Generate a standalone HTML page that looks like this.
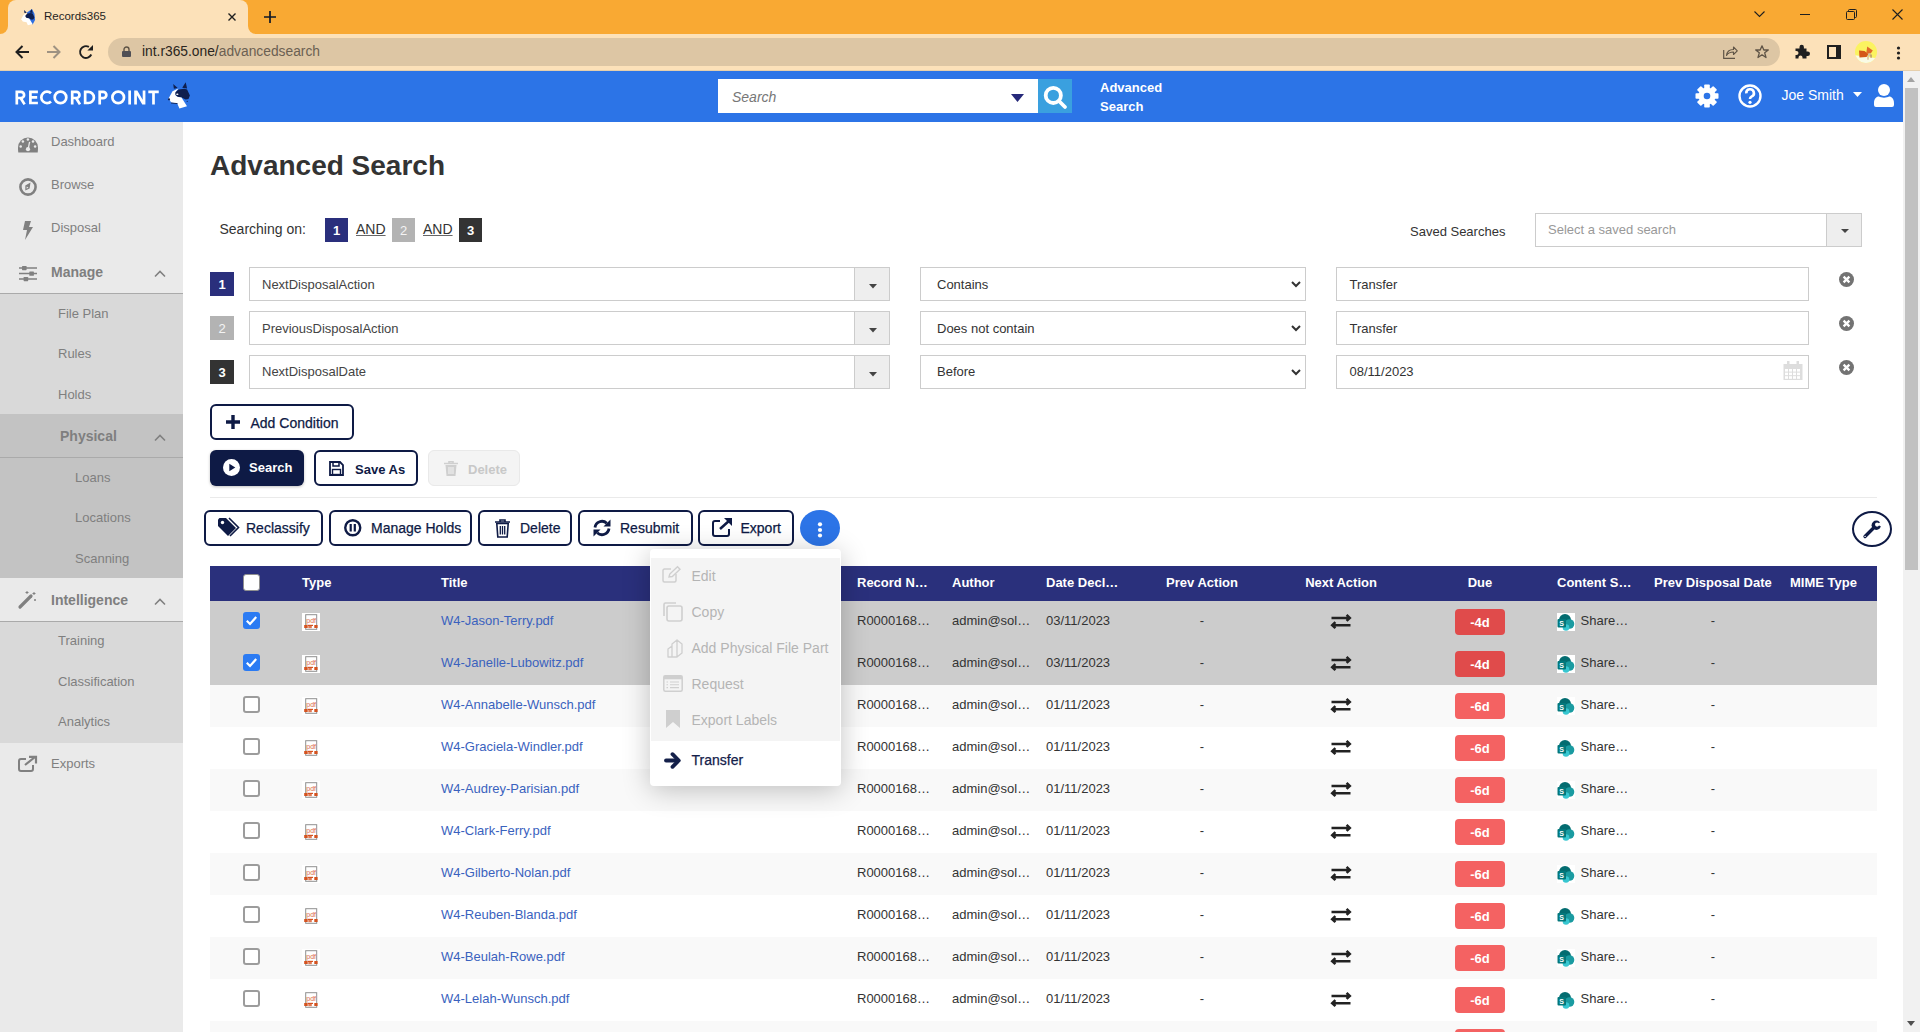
<!DOCTYPE html>
<html><head><meta charset="utf-8"><title>Records365</title>
<style>
html,body{margin:0;padding:0;}
body{width:1920px;height:1032px;overflow:hidden;position:relative;background:#fff;font-family:"Liberation Sans", sans-serif;}
.r{position:absolute;box-sizing:border-box;}
.t{position:absolute;white-space:nowrap;}
svg.r{overflow:visible;}
</style></head><body>
<div class="r" style="left:0px;top:0px;width:1920px;height:71px;background:#FCE1B9"></div><div class="r" style="left:0px;top:0px;width:1920px;height:34px;background:#F9A933"></div><div class="r" style="left:0px;top:26px;width:8px;height:8px;background:#FCE1B9"></div><div class="r" style="left:0px;top:0px;width:8px;height:34px;background:#F9A933;border-bottom-right-radius:8px"></div><div class="r" style="left:248px;top:26px;width:8px;height:8px;background:#FCE1B9"></div><div class="r" style="left:248px;top:0px;width:1672px;height:34px;background:#F9A933;border-bottom-left-radius:8px"></div><div class="r" style="left:8px;top:0px;width:240px;height:34px;background:#FCE1B9;border-radius:8px 8px 0 0"></div><svg class="r" style="left:0px;top:0px;" width="50" height="30" viewBox="0 0 50 30"><g transform="translate(17.1 6.4) scale(0.62)"><path d="M16 10L24 4L28 12L29 22L25 29L19 24Z" fill="#2f6fe0"/><path d="M11.2 5.9L11.9 10.8L15.7 10.1Z M23.7 4.2L20.2 9.8L25.1 10.5Z" fill="#0f1f4f"/><path d="M12.9 14.6L16.7 11.5L22.3 10.8L25.1 11.5L27.9 17.4L26.5 20.9L23.7 21.6L19.5 19.5L15.3 18.8L13.3 17.1Z" fill="#0f1f4f"/><path d="M10.5 13.3L16.4 10.5L13.3 14.6L13.3 17.1L15.3 18.8L19.5 19.5L22 23.5L25 28.2L17.4 30.5L15.3 25.5L9.1 24.4L7.7 22L6.3 21Z" fill="#fff"/></g></svg><div class="t " style="left:44px;top:11.27px;font-size:11.5px;line-height:11.5px;font-weight:400;color:#1F1F1F;">Records365</div><svg class="r" style="left:228px;top:13px;" width="8" height="8" viewBox="0 0 8 8"><path d="M0.5 0.5L7.5 7.5M7.5 0.5L0.5 7.5" stroke="#1f1f1f" stroke-width="1.4"/></svg><svg class="r" style="left:264px;top:11px;" width="12" height="12" viewBox="0 0 12 12"><path d="M6 0V12M0 6H12" stroke="#111827" stroke-width="1.7"/></svg><svg class="r" style="left:1754px;top:11px;" width="11" height="6" viewBox="0 0 11 6"><path d="M0.5 0.5L5.5 5.5L10.5 0.5" stroke="#1f1f1f" stroke-width="1.1" fill="none"/></svg><svg class="r" style="left:1800px;top:14px;" width="10" height="1" viewBox="0 0 10 1"><rect x="0" y="0" width="10" height="1" fill="#1f1f1f"/></svg><svg class="r" style="left:1846px;top:9px;" width="11" height="11" viewBox="0 0 11 11"><rect x="0.5" y="2.5" width="8" height="8" rx="1" stroke="#1f1f1f" stroke-width="1" fill="none"/><path d="M2.5 2.5V1.5a1 1 0 0 1 1-1H9.5a1 1 0 0 1 1 1V7.5a1 1 0 0 1-1 1H8.5" stroke="#1f1f1f" stroke-width="1" fill="none"/></svg><svg class="r" style="left:1892px;top:9px;" width="11" height="11" viewBox="0 0 11 11"><path d="M0.5 0.5L10.5 10.5M10.5 0.5L0.5 10.5" stroke="#1f1f1f" stroke-width="1.1"/></svg><svg class="r" style="left:15px;top:45px;" width="14" height="14" viewBox="0 0 14 14"><path d="M14 7H2M7.5 1L1.5 7L7.5 13" stroke="#1f1f1f" stroke-width="2" fill="none"/></svg><svg class="r" style="left:47px;top:45px;" width="14" height="14" viewBox="0 0 14 14"><path d="M0 7H12M6.5 1L12.5 7L6.5 13" stroke="#9e9282" stroke-width="2" fill="none"/></svg><svg class="r" style="left:79px;top:45px;" width="14" height="14" viewBox="0 0 14 14"><path d="M12.3 9.5A5.9 5.9 0 1 1 9.9 1.9" stroke="#1f1f1f" stroke-width="1.9" fill="none"/><path d="M14 0V5.6H8.4Z" fill="#1f1f1f"/></svg><div class="r" style="left:108px;top:38px;width:1672px;height:28px;background:#DDC6A4;border-radius:14px"></div><svg class="r" style="left:122px;top:46px;" width="9" height="11" viewBox="0 0 9 11"><path d="M2 5V3.5a2.5 2.5 0 0 1 5 0V5" stroke="#5f5446" stroke-width="1.4" fill="none"/><rect x="0" y="5" width="9" height="6" rx="1" fill="#4f4f55"/></svg><div class="t " style="left:142px;top:45.32px;font-size:13.8px;line-height:13.8px;font-weight:400;color:#333;"><span style="color:#2a2520">int.r365.one/</span><span style="color:#6b6052">advancedsearch</span></div><svg class="r" style="left:1723px;top:45px;" width="15" height="14" viewBox="0 0 15 14"><path d="M0.7 5V13.3H12" stroke="#5f5446" stroke-width="1.2" fill="none"/><path d="M3.5 10.5C4 6 7 4.5 10.5 4.5V2L14.3 5.8L10.5 9.5V7C7.5 7 5 8 3.5 10.5Z" stroke="#5f5446" stroke-width="1.1" fill="none" stroke-linejoin="round"/></svg><svg class="r" style="left:1755px;top:45px;" width="14" height="14" viewBox="0 0 14 14"><path d="M7 0.8L8.8 5H13.3L9.7 7.8L11 12.5L7 9.8L3 12.5L4.3 7.8L0.7 5H5.2Z" stroke="#5f5446" stroke-width="1.3" fill="none" stroke-linejoin="round"/></svg><svg class="r" style="left:1795px;top:44px;" width="15" height="15" viewBox="0 0 15 15"><path d="M0.5 4.5H4.5V3A2.2 2.2 0 0 1 8.9 3V4.5H11.5V7.5H12.8A2.2 2.2 0 0 1 12.8 11.9H11.5V14.5H7.5V13.5A2 2 0 0 0 3.5 13.5V14.5H0.5V11H1.5A2 2 0 0 0 1.5 7H0.5Z" fill="#1f1f1f"/></svg><svg class="r" style="left:1827px;top:45px;" width="14" height="14" viewBox="0 0 14 14"><rect x="1" y="1" width="12" height="12" stroke="#1f1f1f" stroke-width="2" fill="none"/><rect x="9" y="1" width="4" height="12" fill="#1f1f1f"/></svg><svg class="r" style="left:1855px;top:41px;" width="22" height="22" viewBox="0 0 22 22"><defs><clipPath id="av"><circle cx="11" cy="11" r="11"/></clipPath></defs><g clip-path="url(#av)"><rect x="0" y="0" width="22" height="22" fill="#fbf360"/><path d="M-1 14L23 17.5V23H-1Z" fill="#f9fbe6"/></g><path d="M4 9.5L9.5 10L13.5 13L11.5 16L4.5 16.5Z" fill="#d4581a"/><path d="M11.3 12L12.2 5.5L15 7.5L17.8 9.6L15.7 12.5L13.5 13Z" fill="#e06a2a"/><path d="M13 12.5L15.7 12L15.5 15L13 15Z" fill="#d8c39a"/><path d="M12 15H14L13.8 18.7H12.2Z" fill="#e0c8a0"/><path d="M15.3 13.5H16.7V16.8H15.5Z" fill="#b08a6a"/></svg><svg class="r" style="left:1896px;top:46px;" width="5" height="14" viewBox="0 0 5 14"><circle cx="2.5" cy="2" r="1.6" fill="#1f1f1f"/><circle cx="2.5" cy="7" r="1.6" fill="#1f1f1f"/><circle cx="2.5" cy="12" r="1.6" fill="#1f1f1f"/></svg><div class="r" style="left:0px;top:70px;width:1920px;height:1px;background:#e6cfac"></div><div class="r" style="left:0px;top:71px;width:1903px;height:51px;background:#2C74E7"></div><svg class="r" style="left:0px;top:80px;" width="200" height="40" viewBox="0 0 200 40"><path d="M16.8 24.4V11.8H21A3.1 3.1 0 0 1 21 18H16.8M20.6 18L24.6 24.4 M37.9 11.8H30.4V23H37.9M30.4 17.4H37.2 M51 13.3A5.7 5.7 0 1 0 51 21.5 M72.2 24.4V11.8H76.4A3.1 3.1 0 0 1 76.4 18H72.2M76 18L80 24.4 M85.15 11.8V23H88.3A5.6 5.6 0 0 0 88.3 11.8Z M99.7 24.4V11.8H103.2A3.15 3.15 0 0 1 103.2 18.1H99.7 M129.65 10.4V24.4 M148.3 11.8H158.75M153.5 11.8V24.4" stroke="#fff" stroke-width="2.7" fill="none" stroke-linejoin="miter"/><path d="M134.2 10.4H136.9V24.4H134.2Z M142.7 10.4H145.4V24.4H142.7Z M134.2 10.4H137.3L145.4 24.4H142.3Z" fill="#fff"/><circle cx="60.5" cy="17.4" r="5.8" stroke="#fff" stroke-width="2.7" fill="none"/><circle cx="118.2" cy="17.4" r="5.8" stroke="#fff" stroke-width="2.7" fill="none"/></svg><svg class="r" style="left:162px;top:78px;" width="36" height="36" viewBox="0 0 36 36"><path d="M11.2 5.9L11.9 10.8L15.7 10.1Z M23.7 4.2L20.2 9.8L25.1 10.5Z" fill="#0f1f4f"/>
<path d="M12.9 14.6L16.7 11.5L22.3 10.8L25.1 11.5L27.9 17.4L26.5 20.9L23.7 21.6L19.5 19.5L15.3 18.8L13.3 17.1Z" fill="#0f1f4f"/>
<path d="M10.5 13.3L16.4 10.5L13.3 14.6L13.3 17.1L15.3 18.8L19.5 19.5L22 23.5L25 28.2L17.4 30.5L15.3 25.5L9.1 24.4L7.7 22L6.3 21Z" fill="#fff"/>
<circle cx="7" cy="21.3" r="1.1" fill="#0f1f4f"/><path d="M9 25L15.5 25.6" stroke="#0f1f4f" stroke-width="0.9"/><ellipse cx="15.3" cy="16.3" rx="1.2" ry="0.8" fill="#fff"/><circle cx="25.2" cy="23.3" r="0.6" fill="#0f1f4f"/></svg><div class="r" style="left:718px;top:79px;width:320px;height:34px;background:#fff"></div><div class="t " style="left:732px;top:89.65px;font-size:14px;line-height:14px;font-weight:400;color:#777;font-style:italic">Search</div><svg class="r" style="left:1011px;top:94px;" width="13" height="8" viewBox="0 0 13 8"><path d="M0 0H13L6.5 8Z" fill="#26297a"/></svg><div class="r" style="left:1038px;top:79px;width:34px;height:34px;background:#3AA0DF"></div><svg class="r" style="left:1044px;top:86px;" width="23" height="23" viewBox="0 0 23 23"><circle cx="9.3" cy="9.4" r="7.6" stroke="#fff" stroke-width="3.8" fill="none"/><path d="M15 15L21 21" stroke="#fff" stroke-width="3.8" stroke-linecap="round"/></svg><div class="t " style="left:1100px;top:81.30px;font-size:13px;line-height:13px;font-weight:700;color:#fff;">Advanced</div><div class="t " style="left:1100px;top:100.40px;font-size:13px;line-height:13px;font-weight:700;color:#fff;">Search</div><svg class="r" style="left:1694.5px;top:83.5px;" width="24" height="24" viewBox="0 0 24 24"><g transform="translate(12 12)" fill="#fff"><rect x="-2.8" y="-11.5" width="5.6" height="5" rx="0.8" transform="rotate(0)"/><rect x="-2.8" y="-11.5" width="5.6" height="5" rx="0.8" transform="rotate(45)"/><rect x="-2.8" y="-11.5" width="5.6" height="5" rx="0.8" transform="rotate(90)"/><rect x="-2.8" y="-11.5" width="5.6" height="5" rx="0.8" transform="rotate(135)"/><rect x="-2.8" y="-11.5" width="5.6" height="5" rx="0.8" transform="rotate(180)"/><rect x="-2.8" y="-11.5" width="5.6" height="5" rx="0.8" transform="rotate(225)"/><rect x="-2.8" y="-11.5" width="5.6" height="5" rx="0.8" transform="rotate(270)"/><rect x="-2.8" y="-11.5" width="5.6" height="5" rx="0.8" transform="rotate(315)"/><circle r="8.6"/></g><circle cx="12" cy="12" r="3.3" fill="#2C74E7"/></svg><svg class="r" style="left:1738px;top:84px;" width="24" height="24" viewBox="0 0 24 24"><circle cx="12" cy="12" r="10.5" stroke="#fff" stroke-width="2.4" fill="none"/><path d="M8.3 9.3A3.8 3.8 0 1 1 13.5 12.6C12.4 13.2 12 13.7 12 15" stroke="#fff" stroke-width="2.6" fill="none"/><circle cx="12" cy="18.3" r="1.6" fill="#fff"/></svg><div class="t " style="left:1781.5px;top:88.45px;font-size:14px;line-height:14px;font-weight:400;color:#fff;">Joe Smith</div><svg class="r" style="left:1853px;top:92px;" width="9" height="5" viewBox="0 0 9 5"><path d="M0 0H9L4.5 5Z" fill="#fff"/></svg><svg class="r" style="left:1874px;top:84px;" width="20" height="24" viewBox="0 0 20 24"><circle cx="10" cy="6" r="6" fill="#fff"/><path d="M0 19C0 14 3 12.5 5 12.5C7 14 13 14 15 12.5C17 12.5 20 14 20 19V21A2 2 0 0 1 18 23H2A2 2 0 0 1 0 21Z" fill="#fff"/></svg><div class="r" style="left:1903px;top:71px;width:17px;height:961px;background:#F1F1F1"></div><div class="r" style="left:1905px;top:88px;width:13px;height:482px;background:#C1C1C1"></div><svg class="r" style="left:1907px;top:77px;" width="8" height="5" viewBox="0 0 8 5"><path d="M0 5H8L4 0Z" fill="#A3A3A3"/></svg><svg class="r" style="left:1907px;top:1021px;" width="8" height="5" viewBox="0 0 8 5"><path d="M0 0H8L4 5Z" fill="#505050"/></svg><div class="r" style="left:0px;top:122px;width:183px;height:910px;background:#EAEAEA"></div><div class="r" style="left:0px;top:294px;width:183px;height:120px;background:#D9D9D9"></div><div class="r" style="left:0px;top:293px;width:183px;height:1px;background:#aaa"></div><div class="r" style="left:0px;top:414px;width:183px;height:164px;background:#C3C3C3"></div><div class="r" style="left:0px;top:457px;width:183px;height:1px;background:#aaa"></div><div class="r" style="left:0px;top:622px;width:183px;height:121px;background:#D9D9D9"></div><div class="r" style="left:0px;top:621px;width:183px;height:1px;background:#aaa"></div><div class="t " style="left:51px;top:135.00px;font-size:13px;line-height:13px;font-weight:400;color:#7f7f7f;">Dashboard</div><div class="t " style="left:51px;top:178.00px;font-size:13px;line-height:13px;font-weight:400;color:#7f7f7f;">Browse</div><div class="t " style="left:51px;top:221.00px;font-size:13px;line-height:13px;font-weight:400;color:#7f7f7f;">Disposal</div><div class="t " style="left:51px;top:265.15px;font-size:14px;line-height:14px;font-weight:700;color:#7f7f7f;">Manage</div><div class="t " style="left:58px;top:307.00px;font-size:13px;line-height:13px;font-weight:400;color:#7f7f7f;">File Plan</div><div class="t " style="left:58px;top:347.00px;font-size:13px;line-height:13px;font-weight:400;color:#7f7f7f;">Rules</div><div class="t " style="left:58px;top:388.00px;font-size:13px;line-height:13px;font-weight:400;color:#7f7f7f;">Holds</div><div class="t " style="left:60px;top:429.15px;font-size:14px;line-height:14px;font-weight:700;color:#7f7f7f;">Physical</div><div class="t " style="left:75px;top:471.00px;font-size:13px;line-height:13px;font-weight:400;color:#7f7f7f;">Loans</div><div class="t " style="left:75px;top:511.00px;font-size:13px;line-height:13px;font-weight:400;color:#7f7f7f;">Locations</div><div class="t " style="left:75px;top:552.00px;font-size:13px;line-height:13px;font-weight:400;color:#7f7f7f;">Scanning</div><div class="t " style="left:51px;top:593.15px;font-size:14px;line-height:14px;font-weight:700;color:#7f7f7f;">Intelligence</div><div class="t " style="left:58px;top:634.30px;font-size:13px;line-height:13px;font-weight:400;color:#7f7f7f;">Training</div><div class="t " style="left:58px;top:675.00px;font-size:13px;line-height:13px;font-weight:400;color:#7f7f7f;">Classification</div><div class="t " style="left:58px;top:715.40px;font-size:13px;line-height:13px;font-weight:400;color:#7f7f7f;">Analytics</div><div class="t " style="left:51px;top:756.60px;font-size:13px;line-height:13px;font-weight:400;color:#7f7f7f;">Exports</div><svg class="r" style="left:18px;top:137px;" width="20" height="16" viewBox="0 0 20 16"><path d="M0.3 15.4C0 13.5 0 12 0 10.5A10 10 0 0 1 20 10.5C20 12 20 13.5 19.7 15.4Z" fill="#808080"/><circle cx="4.9" cy="4.6" r="1.25" fill="#EAEAEA"/><circle cx="9.9" cy="2.6" r="1.25" fill="#EAEAEA"/><circle cx="15" cy="4.6" r="1.25" fill="#EAEAEA"/><circle cx="2.7" cy="9.6" r="1.25" fill="#EAEAEA"/><circle cx="17.1" cy="9.6" r="1.25" fill="#EAEAEA"/><path d="M10.2 12L11.6 4.8" stroke="#EAEAEA" stroke-width="1.3"/><circle cx="10" cy="12.2" r="2.1" fill="#EAEAEA"/></svg><svg class="r" style="left:19px;top:178px;" width="18" height="18" viewBox="0 0 18 18"><circle cx="9" cy="9" r="7.6" stroke="#808080" stroke-width="2.6" fill="none"/><path d="M6.3 7.5L11.5 4.6L10.6 10.4L6.3 12.5Z" fill="#808080"/><path d="M7.6 8.4L9.5 9.5L7.6 10.8Z" fill="#EAEAEA"/></svg><svg class="r" style="left:22px;top:221px;" width="12" height="19" viewBox="0 0 12 19"><path d="M3 0H9L7 6H11L3 19L5 9H1Z" fill="#808080"/></svg><svg class="r" style="left:19px;top:266px;" width="18" height="15" viewBox="0 0 18 15"><path d="M0 2H18M0 7.5H18M0 13H18" stroke="#808080" stroke-width="1.3"/><rect x="3" y="0" width="4.6" height="4.2" rx="0.6" fill="#808080"/><rect x="10.3" y="5.4" width="4.6" height="4.4" rx="0.6" fill="#808080"/><rect x="4.6" y="11" width="4.6" height="4.2" rx="0.6" fill="#808080"/></svg><svg class="r" style="left:154px;top:270px;" width="12" height="7" viewBox="0 0 12 7"><path d="M1 6.5L6 1.5L11 6.5" stroke="#808080" stroke-width="1.6" fill="none"/></svg><svg class="r" style="left:154px;top:434px;" width="12" height="7" viewBox="0 0 12 7"><path d="M1 6.5L6 1.5L11 6.5" stroke="#808080" stroke-width="1.6" fill="none"/></svg><svg class="r" style="left:154px;top:598px;" width="12" height="7" viewBox="0 0 12 7"><path d="M1 6.5L6 1.5L11 6.5" stroke="#808080" stroke-width="1.6" fill="none"/></svg><svg class="r" style="left:18px;top:590px;" width="20" height="19" viewBox="0 0 20 19"><path d="M2 17L13 6" stroke="#808080" stroke-width="3.2" stroke-linecap="round"/><path d="M9 1V4M7.5 2.5H10.5M16 2V5M14.5 3.5H17.5M17 9V11M16 10H18" stroke="#808080" stroke-width="1"/></svg><svg class="r" style="left:18px;top:756px;" width="20" height="16" viewBox="0 0 20 16"><path d="M8 3H3A2 2 0 0 0 1 5V13A2 2 0 0 0 3 15H13A2 2 0 0 0 15 13V9" stroke="#808080" stroke-width="2" fill="none"/><path d="M7 9L17 1M11 0.8H18V7.5" stroke="#808080" stroke-width="2.2" fill="none"/></svg><div class="t " style="left:210px;top:152.30px;font-size:28px;line-height:28px;font-weight:700;color:#333;">Advanced Search</div><div class="t " style="left:219.5px;top:221.95px;font-size:14px;line-height:14px;font-weight:400;color:#333;">Searching on:</div><div class="r" style="left:325px;top:218px;width:23px;height:24px;background:#2A2F7C"></div><div class="t" style="left:186.5px;width:300px;text-align:center;top:224.00px;font-size:13px;line-height:13px;font-weight:700;color:#fff;">1</div><div class="t " style="left:356px;top:221.95px;font-size:14px;line-height:14px;font-weight:400;color:#333;text-decoration:underline;text-decoration-color:#666">AND</div><div class="r" style="left:392px;top:218px;width:23px;height:24px;background:#B3B3B3"></div><div class="t" style="left:253.5px;width:300px;text-align:center;top:224.00px;font-size:13px;line-height:13px;font-weight:400;color:#f4f4f4;">2</div><div class="t " style="left:423px;top:221.95px;font-size:14px;line-height:14px;font-weight:400;color:#333;text-decoration:underline;text-decoration-color:#666">AND</div><div class="r" style="left:459px;top:218px;width:23px;height:24px;background:#333333"></div><div class="t" style="left:320.5px;width:300px;text-align:center;top:224.00px;font-size:13px;line-height:13px;font-weight:700;color:#fff;">3</div><div class="t " style="left:1410px;top:225.00px;font-size:13px;line-height:13px;font-weight:400;color:#333;">Saved Searches</div><div class="r" style="left:1535px;top:213px;width:327px;height:34px;background:#fff;border:1px solid #ccc"></div><div class="r" style="left:1826px;top:213px;width:36px;height:34px;background:#eee;border:1px solid #ccc"></div><div class="t " style="left:1548px;top:223.00px;font-size:13px;line-height:13px;font-weight:400;color:#999;">Select a saved search</div><svg class="r" style="left:1841px;top:229px;" width="8" height="4" viewBox="0 0 8 4"><path d="M0 0H8L4 4Z" fill="#444"/></svg><div class="r" style="left:210px;top:272px;width:24px;height:24px;background:#2A2F7C"></div><div class="t" style="left:72px;width:300px;text-align:center;top:278.00px;font-size:13px;line-height:13px;font-weight:700;color:#fff;">1</div><div class="r" style="left:249px;top:267px;width:641px;height:34px;background:#fff;border:1px solid #ccc"></div><div class="r" style="left:854px;top:267px;width:36px;height:34px;background:#eee;border:1px solid #ccc"></div><svg class="r" style="left:869px;top:283.5px;" width="8" height="4.5" viewBox="0 0 8 4.5"><path d="M0 0H8L4 4.5Z" fill="#444"/></svg><div class="t " style="left:262px;top:278.00px;font-size:13px;line-height:13px;font-weight:400;color:#444;">NextDisposalAction</div><div class="r" style="left:920px;top:267px;width:386px;height:34px;background:#fff;border:1px solid #ccc"></div><div class="t " style="left:937px;top:278.00px;font-size:13px;line-height:13px;font-weight:400;color:#333;">Contains</div><svg class="r" style="left:1291px;top:281px;" width="10" height="6" viewBox="0 0 10 6"><path d="M1 1L5 5L9 1" stroke="#333" stroke-width="2" fill="none"/></svg><div class="r" style="left:1336px;top:267px;width:473px;height:34px;background:#fff;border:1px solid #ccc"></div><div class="t " style="left:1349.5px;top:278.00px;font-size:13px;line-height:13px;font-weight:400;color:#333;">Transfer</div><svg class="r" style="left:1839px;top:271.5px;" width="15" height="15" viewBox="0 0 15 15"><circle cx="7.5" cy="7.5" r="7.5" fill="#737373"/><path d="M4.6 4.6L10.4 10.4M10.4 4.6L4.6 10.4" stroke="#fff" stroke-width="2.3"/></svg><div class="r" style="left:210px;top:316px;width:24px;height:24px;background:#B3B3B3"></div><div class="t" style="left:72px;width:300px;text-align:center;top:322.00px;font-size:13px;line-height:13px;font-weight:400;color:#f4f4f4;">2</div><div class="r" style="left:249px;top:311px;width:641px;height:34px;background:#fff;border:1px solid #ccc"></div><div class="r" style="left:854px;top:311px;width:36px;height:34px;background:#eee;border:1px solid #ccc"></div><svg class="r" style="left:869px;top:327.5px;" width="8" height="4.5" viewBox="0 0 8 4.5"><path d="M0 0H8L4 4.5Z" fill="#444"/></svg><div class="t " style="left:262px;top:322.00px;font-size:13px;line-height:13px;font-weight:400;color:#444;">PreviousDisposalAction</div><div class="r" style="left:920px;top:311px;width:386px;height:34px;background:#fff;border:1px solid #ccc"></div><div class="t " style="left:937px;top:322.00px;font-size:13px;line-height:13px;font-weight:400;color:#333;">Does not contain</div><svg class="r" style="left:1291px;top:325px;" width="10" height="6" viewBox="0 0 10 6"><path d="M1 1L5 5L9 1" stroke="#333" stroke-width="2" fill="none"/></svg><div class="r" style="left:1336px;top:311px;width:473px;height:34px;background:#fff;border:1px solid #ccc"></div><div class="t " style="left:1349.5px;top:322.00px;font-size:13px;line-height:13px;font-weight:400;color:#333;">Transfer</div><svg class="r" style="left:1839px;top:315.5px;" width="15" height="15" viewBox="0 0 15 15"><circle cx="7.5" cy="7.5" r="7.5" fill="#737373"/><path d="M4.6 4.6L10.4 10.4M10.4 4.6L4.6 10.4" stroke="#fff" stroke-width="2.3"/></svg><div class="r" style="left:210px;top:360px;width:24px;height:24px;background:#333333"></div><div class="t" style="left:72px;width:300px;text-align:center;top:366.00px;font-size:13px;line-height:13px;font-weight:700;color:#fff;">3</div><div class="r" style="left:249px;top:355px;width:641px;height:34px;background:#fff;border:1px solid #ccc"></div><div class="r" style="left:854px;top:355px;width:36px;height:34px;background:#eee;border:1px solid #ccc"></div><svg class="r" style="left:869px;top:371.5px;" width="8" height="4.5" viewBox="0 0 8 4.5"><path d="M0 0H8L4 4.5Z" fill="#444"/></svg><div class="t " style="left:262px;top:365.00px;font-size:13px;line-height:13px;font-weight:400;color:#444;">NextDisposalDate</div><div class="r" style="left:920px;top:355px;width:386px;height:34px;background:#fff;border:1px solid #ccc"></div><div class="t " style="left:937px;top:365.00px;font-size:13px;line-height:13px;font-weight:400;color:#333;">Before</div><svg class="r" style="left:1291px;top:369px;" width="10" height="6" viewBox="0 0 10 6"><path d="M1 1L5 5L9 1" stroke="#333" stroke-width="2" fill="none"/></svg><div class="r" style="left:1336px;top:355px;width:473px;height:34px;background:#fff;border:1px solid #ccc"></div><div class="t " style="left:1349.5px;top:365.00px;font-size:13px;line-height:13px;font-weight:400;color:#333;">08/11/2023</div><svg class="r" style="left:1783px;top:361px;" width="20" height="20" viewBox="0 0 20 20"><rect x="0.5" y="3" width="19" height="16" fill="#ddd"/><rect x="4" y="0" width="2.5" height="5" fill="#ddd"/><rect x="13.5" y="0" width="2.5" height="5" fill="#ddd"/><rect x="2" y="8.0" width="3" height="2.6" fill="#fff"/><rect x="2" y="11.6" width="3" height="2.6" fill="#fff"/><rect x="2" y="15.2" width="3" height="2.6" fill="#fff"/><rect x="6" y="8.0" width="3" height="2.6" fill="#fff"/><rect x="6" y="11.6" width="3" height="2.6" fill="#fff"/><rect x="6" y="15.2" width="3" height="2.6" fill="#fff"/><rect x="10" y="8.0" width="3" height="2.6" fill="#fff"/><rect x="10" y="11.6" width="3" height="2.6" fill="#fff"/><rect x="10" y="15.2" width="3" height="2.6" fill="#fff"/><rect x="14" y="8.0" width="3" height="2.6" fill="#fff"/><rect x="14" y="11.6" width="3" height="2.6" fill="#fff"/><rect x="14" y="15.2" width="3" height="2.6" fill="#fff"/></svg><svg class="r" style="left:1839px;top:359.5px;" width="15" height="15" viewBox="0 0 15 15"><circle cx="7.5" cy="7.5" r="7.5" fill="#737373"/><path d="M4.6 4.6L10.4 10.4M10.4 4.6L4.6 10.4" stroke="#fff" stroke-width="2.3"/></svg><div class="r" style="left:210px;top:404px;width:144px;height:36px;border:2px solid #0E1A45;border-radius:6px;background:#fff"></div><svg class="r" style="left:226px;top:415px;" width="14" height="14" viewBox="0 0 14 14"><path d="M7 0V14M0 7H14" stroke="#0E1A45" stroke-width="3.4"/></svg><div class="t " style="left:250.5px;top:416.15px;font-size:14px;line-height:14px;font-weight:400;color:#0E1A45;-webkit-text-stroke:0.25px currentColor">Add Condition</div><div class="r" style="left:210px;top:450px;width:94px;height:36px;background:#0E1A45;border-radius:6px;box-shadow:0 1px 3px rgba(0,0,0,.25)"></div><svg class="r" style="left:223px;top:459px;" width="17" height="17" viewBox="0 0 17 17"><circle cx="8.5" cy="8.5" r="8.5" fill="#fff"/><path d="M6.3 4.8L12.3 8.5L6.3 12.2Z" fill="#0E1A45"/></svg><div class="t " style="left:249px;top:461.00px;font-size:13px;line-height:13px;font-weight:700;color:#fff;">Search</div><div class="r" style="left:314px;top:450px;width:104px;height:36px;border:2px solid #0E1A45;border-radius:6px;background:#fff"></div><svg class="r" style="left:329px;top:461px;" width="15" height="15" viewBox="0 0 15 15"><path d="M1 1H11L14 4V14H1Z" stroke="#0E1A45" stroke-width="1.8" fill="none"/><rect x="4" y="1" width="6" height="4" stroke="#0E1A45" stroke-width="1.5" fill="none"/><rect x="3.5" y="8.5" width="8" height="5" stroke="#0E1A45" stroke-width="1.4" fill="none"/></svg><div class="t " style="left:355px;top:463.00px;font-size:13px;line-height:13px;font-weight:700;color:#0E1A45;">Save As</div><div class="r" style="left:428px;top:450px;width:92px;height:36px;background:#f4f4f4;border:1px solid #e9e9e9;border-radius:6px"></div><svg class="r" style="left:444px;top:461px;" width="14" height="15" viewBox="0 0 14 15"><path d="M0 2.5H14M5 2.5V0.8H9V2.5" stroke="#cfcfcf" stroke-width="1.6" fill="none"/><path d="M1.5 4H12.5L11.5 15H2.5Z" fill="#cfcfcf"/><path d="M5 6V13M7 6V13M9 6V13" stroke="#f4f4f4" stroke-width="1"/></svg><div class="t " style="left:468px;top:463.00px;font-size:13px;line-height:13px;font-weight:700;color:#c8c8c8;">Delete</div><div class="r" style="left:210px;top:497px;width:1667px;height:1px;background:#eaeaea"></div><div class="r" style="left:204px;top:510px;width:119px;height:36px;border:2px solid #0E1A45;border-radius:6px;background:#fff"></div><svg class="r" style="left:218px;top:518px;" width="21" height="18" viewBox="0 0 21 18"><path d="M0 1.5V8L10 18L18 10L8 0H1.5Z" fill="#0E1A45"/><circle cx="4.5" cy="4.5" r="1.7" fill="#fff"/><path d="M11 0L20.5 9.5L12 18" stroke="#0E1A45" stroke-width="1.6" fill="none"/></svg><div class="t " style="left:246px;top:521.15px;font-size:14px;line-height:14px;font-weight:400;color:#0E1A45;-webkit-text-stroke:0.25px currentColor">Reclassify</div><div class="r" style="left:329px;top:510px;width:143px;height:36px;border:2px solid #0E1A45;border-radius:6px;background:#fff"></div><svg class="r" style="left:344px;top:519px;" width="18" height="18" viewBox="0 0 18 18"><circle cx="8.75" cy="8.75" r="7.5" stroke="#0E1A45" stroke-width="2.4" fill="none"/><rect x="5.6" y="5" width="2.2" height="7.5" fill="#0E1A45"/><rect x="9.7" y="5" width="2.2" height="7.5" fill="#0E1A45"/></svg><div class="t " style="left:371px;top:521.15px;font-size:14px;line-height:14px;font-weight:400;color:#0E1A45;-webkit-text-stroke:0.25px currentColor">Manage Holds</div><div class="r" style="left:478px;top:510px;width:94px;height:36px;border:2px solid #0E1A45;border-radius:6px;background:#fff"></div><svg class="r" style="left:495px;top:519px;" width="15" height="18" viewBox="0 0 15 18"><path d="M0 3H15M5 3V1H10V3" stroke="#0E1A45" stroke-width="1.6" fill="none"/><path d="M1.8 4.5H13.2L12.2 18H2.8Z" stroke="#0E1A45" stroke-width="1.6" fill="none"/><path d="M5.3 7V15.5M7.5 7V15.5M9.7 7V15.5" stroke="#0E1A45" stroke-width="1.3"/></svg><div class="t " style="left:520px;top:521.15px;font-size:14px;line-height:14px;font-weight:400;color:#0E1A45;-webkit-text-stroke:0.25px currentColor">Delete</div><div class="r" style="left:578px;top:510px;width:115px;height:36px;border:2px solid #0E1A45;border-radius:6px;background:#fff"></div><svg class="r" style="left:593px;top:519px;" width="18" height="18" viewBox="0 0 18 18"><path d="M2 8.5A7 7 0 0 1 13.8 4.3" stroke="#0E1A45" stroke-width="2.8" fill="none"/><path d="M16 9.5A7 7 0 0 1 4.2 13.7" stroke="#0E1A45" stroke-width="2.8" fill="none"/><path d="M17.5 0.5V7.5H10.5Z" fill="#0E1A45"/><path d="M0.5 17.5V10.5H7.5Z" fill="#0E1A45"/></svg><div class="t " style="left:620px;top:521.15px;font-size:14px;line-height:14px;font-weight:400;color:#0E1A45;-webkit-text-stroke:0.25px currentColor">Resubmit</div><div class="r" style="left:698px;top:510px;width:96px;height:36px;border:2px solid #0E1A45;border-radius:6px;background:#fff"></div><svg class="r" style="left:712px;top:518px;" width="20" height="18" viewBox="0 0 20 18"><path d="M8 3H3A2 2 0 0 0 1 5V16A2 2 0 0 0 3 18H15A2 2 0 0 0 17 16V11" stroke="#0E1A45" stroke-width="2" fill="none"/><path d="M8 11L18 2" stroke="#0E1A45" stroke-width="2.5"/><path d="M12 0H20V8Z" fill="#0E1A45"/></svg><div class="t " style="left:740.5px;top:521.15px;font-size:14px;line-height:14px;font-weight:400;color:#0E1A45;-webkit-text-stroke:0.25px currentColor">Export</div><div class="r" style="left:800px;top:510px;width:40px;height:36px;background:#2C74E7;border-radius:50%"></div><svg class="r" style="left:817px;top:521px;" width="6" height="18" viewBox="0 0 6 18"><circle cx="3" cy="3.3" r="2.1" fill="#fff"/><circle cx="3" cy="9" r="2.1" fill="#fff"/><circle cx="3" cy="14.5" r="2.1" fill="#fff"/></svg><div class="r" style="left:1852px;top:511px;width:40px;height:36px;border:2px solid #0E1A45;border-radius:50%;background:#fff"></div><svg class="r" style="left:1862px;top:520px;" width="20" height="19" viewBox="0 0 20 19"><path d="M3 16.5L11 8.5" stroke="#0E1A45" stroke-width="3.3" stroke-linecap="round"/><circle cx="14.3" cy="5.3" r="4.7" fill="#0E1A45"/><circle cx="15.1" cy="4.6" r="2.1" fill="#fff"/><path d="M15.1 4.6L20.5 0.5V7.2Z" fill="#fff"/><circle cx="3.1" cy="16.4" r="0.7" fill="#fff"/></svg><div class="r" style="left:210px;top:566px;width:1667px;height:35px;background:#2A307C"></div><div class="r" style="left:243px;top:574px;width:17px;height:17px;background:#fff;border:1.5px solid #8f8f8f;border-radius:3px"></div><div class="t " style="left:302px;top:575.80px;font-size:13px;line-height:13px;font-weight:700;color:#fff;">Type</div><div class="t " style="left:441px;top:575.80px;font-size:13px;line-height:13px;font-weight:700;color:#fff;">Title</div><div class="t " style="left:857px;top:575.80px;font-size:13px;line-height:13px;font-weight:700;color:#fff;">Record N…</div><div class="t " style="left:952px;top:575.80px;font-size:13px;line-height:13px;font-weight:700;color:#fff;">Author</div><div class="t " style="left:1046px;top:575.80px;font-size:13px;line-height:13px;font-weight:700;color:#fff;">Date Decl…</div><div class="t " style="left:1654px;top:575.80px;font-size:13px;line-height:13px;font-weight:700;color:#fff;">Prev Disposal Date</div><div class="t " style="left:1790px;top:575.80px;font-size:13px;line-height:13px;font-weight:700;color:#fff;">MIME Type</div><div class="t " style="left:1557px;top:575.80px;font-size:13px;line-height:13px;font-weight:700;color:#fff;">Content S…</div><div class="t" style="left:1052px;width:300px;text-align:center;top:575.80px;font-size:13px;line-height:13px;font-weight:700;color:#fff;">Prev Action</div><div class="t" style="left:1191px;width:300px;text-align:center;top:575.80px;font-size:13px;line-height:13px;font-weight:700;color:#fff;">Next Action</div><div class="t" style="left:1330px;width:300px;text-align:center;top:575.80px;font-size:13px;line-height:13px;font-weight:700;color:#fff;">Due</div><div class="r" style="left:210px;top:601px;width:1667px;height:42px;background:#CCCCCC"></div><svg class="r" style="left:243px;top:612px;" width="17" height="17" viewBox="0 0 17 17"><rect x="0" y="0" width="17" height="17" rx="3" fill="#2B7BF3"/><path d="M3.8 8.8L7 12L13.2 5" stroke="#fff" stroke-width="2.2" fill="none"/></svg><svg class="r" style="left:302px;top:613px;" width="18" height="18" viewBox="0 0 18 18"><rect x="0" y="0" width="18" height="18" fill="#fff"/><rect x="3.7" y="1.7" width="11" height="14.6" stroke="#8f8f8f" stroke-width="1" fill="#fff"/>
<text x="9.2" y="10.3" font-family="Liberation Sans" font-size="7" fill="#db6a45" text-anchor="middle">pdf</text>
<rect x="2.2" y="12" width="3.5" height="3" fill="#d4521f"/><rect x="6" y="11.8" width="5" height="1.2" fill="#d4521f"/><rect x="6.3" y="13" width="3.5" height="2.2" fill="#e07a55"/><rect x="12.3" y="12" width="3.3" height="3" fill="#d4521f"/></svg><div class="t " style="left:441px;top:613.80px;font-size:13px;line-height:13px;font-weight:400;color:#3A62BE;">W4-Jason-Terry.pdf</div><div class="t " style="left:857px;top:613.80px;font-size:13px;line-height:13px;font-weight:400;color:#333;">R0000168…</div><div class="t " style="left:952px;top:613.80px;font-size:13px;line-height:13px;font-weight:400;color:#333;">admin@sol…</div><div class="t " style="left:1046px;top:613.80px;font-size:13px;line-height:13px;font-weight:400;color:#333;">03/11/2023</div><div class="t" style="left:1052px;width:300px;text-align:center;top:613.80px;font-size:13px;line-height:13px;font-weight:400;color:#333;">-</div><svg class="r" style="left:1331px;top:614px;" width="20" height="16" viewBox="0 0 20 16"><path d="M0.5 3.9H18.3M15.6 0.9L18.8 3.9L15.6 6.9M19.5 11.2H1.7M4.4 8.2L1.2 11.2L4.4 14.2" stroke="#222" stroke-width="2.5" fill="none"/></svg><div class="r" style="left:1455px;top:609px;width:50px;height:26px;background:#E04B4B;border-radius:4px"></div><div class="t" style="left:1330px;width:300px;text-align:center;top:616.00px;font-size:13px;line-height:13px;font-weight:700;color:#fff;">-4d</div><svg class="r" style="left:1557px;top:613px;" width="18" height="18" viewBox="0 0 18 18"><rect x="0" y="0" width="18" height="18" fill="#fff"/><circle cx="8" cy="7" r="6" fill="#036c70"/><circle cx="12.5" cy="11" r="4.8" fill="#1a9ba1"/><circle cx="9" cy="14.5" r="3.3" fill="#37c6d0"/><rect x="0.5" y="6" width="8.5" height="8.5" rx="1" fill="#03787c"/><text x="4.7" y="13" font-family="Liberation Sans" font-size="7" font-weight="700" fill="#fff" text-anchor="middle">S</text></svg><div class="t " style="left:1580.5px;top:613.80px;font-size:13px;line-height:13px;font-weight:400;color:#333;">Share…</div><div class="t" style="left:1563px;width:300px;text-align:center;top:613.80px;font-size:13px;line-height:13px;font-weight:400;color:#333;">-</div><div class="r" style="left:210px;top:643px;width:1667px;height:42px;background:#CCCCCC"></div><svg class="r" style="left:243px;top:654px;" width="17" height="17" viewBox="0 0 17 17"><rect x="0" y="0" width="17" height="17" rx="3" fill="#2B7BF3"/><path d="M3.8 8.8L7 12L13.2 5" stroke="#fff" stroke-width="2.2" fill="none"/></svg><svg class="r" style="left:302px;top:655px;" width="18" height="18" viewBox="0 0 18 18"><rect x="0" y="0" width="18" height="18" fill="#fff"/><rect x="3.7" y="1.7" width="11" height="14.6" stroke="#8f8f8f" stroke-width="1" fill="#fff"/>
<text x="9.2" y="10.3" font-family="Liberation Sans" font-size="7" fill="#db6a45" text-anchor="middle">pdf</text>
<rect x="2.2" y="12" width="3.5" height="3" fill="#d4521f"/><rect x="6" y="11.8" width="5" height="1.2" fill="#d4521f"/><rect x="6.3" y="13" width="3.5" height="2.2" fill="#e07a55"/><rect x="12.3" y="12" width="3.3" height="3" fill="#d4521f"/></svg><div class="t " style="left:441px;top:655.80px;font-size:13px;line-height:13px;font-weight:400;color:#3A62BE;">W4-Janelle-Lubowitz.pdf</div><div class="t " style="left:857px;top:655.80px;font-size:13px;line-height:13px;font-weight:400;color:#333;">R0000168…</div><div class="t " style="left:952px;top:655.80px;font-size:13px;line-height:13px;font-weight:400;color:#333;">admin@sol…</div><div class="t " style="left:1046px;top:655.80px;font-size:13px;line-height:13px;font-weight:400;color:#333;">03/11/2023</div><div class="t" style="left:1052px;width:300px;text-align:center;top:655.80px;font-size:13px;line-height:13px;font-weight:400;color:#333;">-</div><svg class="r" style="left:1331px;top:656px;" width="20" height="16" viewBox="0 0 20 16"><path d="M0.5 3.9H18.3M15.6 0.9L18.8 3.9L15.6 6.9M19.5 11.2H1.7M4.4 8.2L1.2 11.2L4.4 14.2" stroke="#222" stroke-width="2.5" fill="none"/></svg><div class="r" style="left:1455px;top:651px;width:50px;height:26px;background:#E04B4B;border-radius:4px"></div><div class="t" style="left:1330px;width:300px;text-align:center;top:658.00px;font-size:13px;line-height:13px;font-weight:700;color:#fff;">-4d</div><svg class="r" style="left:1557px;top:655px;" width="18" height="18" viewBox="0 0 18 18"><rect x="0" y="0" width="18" height="18" fill="#fff"/><circle cx="8" cy="7" r="6" fill="#036c70"/><circle cx="12.5" cy="11" r="4.8" fill="#1a9ba1"/><circle cx="9" cy="14.5" r="3.3" fill="#37c6d0"/><rect x="0.5" y="6" width="8.5" height="8.5" rx="1" fill="#03787c"/><text x="4.7" y="13" font-family="Liberation Sans" font-size="7" font-weight="700" fill="#fff" text-anchor="middle">S</text></svg><div class="t " style="left:1580.5px;top:655.80px;font-size:13px;line-height:13px;font-weight:400;color:#333;">Share…</div><div class="t" style="left:1563px;width:300px;text-align:center;top:655.80px;font-size:13px;line-height:13px;font-weight:400;color:#333;">-</div><div class="r" style="left:210px;top:685px;width:1667px;height:42px;background:#F9F9F9"></div><div class="r" style="left:243px;top:696px;width:17px;height:17px;background:#fff;border:2px solid #9c9c9c;border-radius:3px"></div><svg class="r" style="left:302px;top:697px;" width="18" height="18" viewBox="0 0 18 18"><rect x="0" y="0" width="18" height="18" fill="#fff"/><rect x="3.7" y="1.7" width="11" height="14.6" stroke="#8f8f8f" stroke-width="1" fill="#fff"/>
<text x="9.2" y="10.3" font-family="Liberation Sans" font-size="7" fill="#db6a45" text-anchor="middle">pdf</text>
<rect x="2.2" y="12" width="3.5" height="3" fill="#d4521f"/><rect x="6" y="11.8" width="5" height="1.2" fill="#d4521f"/><rect x="6.3" y="13" width="3.5" height="2.2" fill="#e07a55"/><rect x="12.3" y="12" width="3.3" height="3" fill="#d4521f"/></svg><div class="t " style="left:441px;top:697.80px;font-size:13px;line-height:13px;font-weight:400;color:#3A62BE;">W4-Annabelle-Wunsch.pdf</div><div class="t " style="left:857px;top:697.80px;font-size:13px;line-height:13px;font-weight:400;color:#333;">R0000168…</div><div class="t " style="left:952px;top:697.80px;font-size:13px;line-height:13px;font-weight:400;color:#333;">admin@sol…</div><div class="t " style="left:1046px;top:697.80px;font-size:13px;line-height:13px;font-weight:400;color:#333;">01/11/2023</div><div class="t" style="left:1052px;width:300px;text-align:center;top:697.80px;font-size:13px;line-height:13px;font-weight:400;color:#333;">-</div><svg class="r" style="left:1331px;top:698px;" width="20" height="16" viewBox="0 0 20 16"><path d="M0.5 3.9H18.3M15.6 0.9L18.8 3.9L15.6 6.9M19.5 11.2H1.7M4.4 8.2L1.2 11.2L4.4 14.2" stroke="#222" stroke-width="2.5" fill="none"/></svg><div class="r" style="left:1455px;top:693px;width:50px;height:26px;background:#F46262;border-radius:4px"></div><div class="t" style="left:1330px;width:300px;text-align:center;top:700.00px;font-size:13px;line-height:13px;font-weight:700;color:#fff;">-6d</div><svg class="r" style="left:1557px;top:697px;" width="18" height="18" viewBox="0 0 18 18"><rect x="0" y="0" width="18" height="18" fill="#fff"/><circle cx="8" cy="7" r="6" fill="#036c70"/><circle cx="12.5" cy="11" r="4.8" fill="#1a9ba1"/><circle cx="9" cy="14.5" r="3.3" fill="#37c6d0"/><rect x="0.5" y="6" width="8.5" height="8.5" rx="1" fill="#03787c"/><text x="4.7" y="13" font-family="Liberation Sans" font-size="7" font-weight="700" fill="#fff" text-anchor="middle">S</text></svg><div class="t " style="left:1580.5px;top:697.80px;font-size:13px;line-height:13px;font-weight:400;color:#333;">Share…</div><div class="t" style="left:1563px;width:300px;text-align:center;top:697.80px;font-size:13px;line-height:13px;font-weight:400;color:#333;">-</div><div class="r" style="left:210px;top:727px;width:1667px;height:42px;background:#FFFFFF"></div><div class="r" style="left:243px;top:738px;width:17px;height:17px;background:#fff;border:2px solid #9c9c9c;border-radius:3px"></div><svg class="r" style="left:302px;top:739px;" width="18" height="18" viewBox="0 0 18 18"><rect x="0" y="0" width="18" height="18" fill="#fff"/><rect x="3.7" y="1.7" width="11" height="14.6" stroke="#8f8f8f" stroke-width="1" fill="#fff"/>
<text x="9.2" y="10.3" font-family="Liberation Sans" font-size="7" fill="#db6a45" text-anchor="middle">pdf</text>
<rect x="2.2" y="12" width="3.5" height="3" fill="#d4521f"/><rect x="6" y="11.8" width="5" height="1.2" fill="#d4521f"/><rect x="6.3" y="13" width="3.5" height="2.2" fill="#e07a55"/><rect x="12.3" y="12" width="3.3" height="3" fill="#d4521f"/></svg><div class="t " style="left:441px;top:739.80px;font-size:13px;line-height:13px;font-weight:400;color:#3A62BE;">W4-Graciela-Windler.pdf</div><div class="t " style="left:857px;top:739.80px;font-size:13px;line-height:13px;font-weight:400;color:#333;">R0000168…</div><div class="t " style="left:952px;top:739.80px;font-size:13px;line-height:13px;font-weight:400;color:#333;">admin@sol…</div><div class="t " style="left:1046px;top:739.80px;font-size:13px;line-height:13px;font-weight:400;color:#333;">01/11/2023</div><div class="t" style="left:1052px;width:300px;text-align:center;top:739.80px;font-size:13px;line-height:13px;font-weight:400;color:#333;">-</div><svg class="r" style="left:1331px;top:740px;" width="20" height="16" viewBox="0 0 20 16"><path d="M0.5 3.9H18.3M15.6 0.9L18.8 3.9L15.6 6.9M19.5 11.2H1.7M4.4 8.2L1.2 11.2L4.4 14.2" stroke="#222" stroke-width="2.5" fill="none"/></svg><div class="r" style="left:1455px;top:735px;width:50px;height:26px;background:#F46262;border-radius:4px"></div><div class="t" style="left:1330px;width:300px;text-align:center;top:742.00px;font-size:13px;line-height:13px;font-weight:700;color:#fff;">-6d</div><svg class="r" style="left:1557px;top:739px;" width="18" height="18" viewBox="0 0 18 18"><rect x="0" y="0" width="18" height="18" fill="#fff"/><circle cx="8" cy="7" r="6" fill="#036c70"/><circle cx="12.5" cy="11" r="4.8" fill="#1a9ba1"/><circle cx="9" cy="14.5" r="3.3" fill="#37c6d0"/><rect x="0.5" y="6" width="8.5" height="8.5" rx="1" fill="#03787c"/><text x="4.7" y="13" font-family="Liberation Sans" font-size="7" font-weight="700" fill="#fff" text-anchor="middle">S</text></svg><div class="t " style="left:1580.5px;top:739.80px;font-size:13px;line-height:13px;font-weight:400;color:#333;">Share…</div><div class="t" style="left:1563px;width:300px;text-align:center;top:739.80px;font-size:13px;line-height:13px;font-weight:400;color:#333;">-</div><div class="r" style="left:210px;top:769px;width:1667px;height:42px;background:#F9F9F9"></div><div class="r" style="left:243px;top:780px;width:17px;height:17px;background:#fff;border:2px solid #9c9c9c;border-radius:3px"></div><svg class="r" style="left:302px;top:781px;" width="18" height="18" viewBox="0 0 18 18"><rect x="0" y="0" width="18" height="18" fill="#fff"/><rect x="3.7" y="1.7" width="11" height="14.6" stroke="#8f8f8f" stroke-width="1" fill="#fff"/>
<text x="9.2" y="10.3" font-family="Liberation Sans" font-size="7" fill="#db6a45" text-anchor="middle">pdf</text>
<rect x="2.2" y="12" width="3.5" height="3" fill="#d4521f"/><rect x="6" y="11.8" width="5" height="1.2" fill="#d4521f"/><rect x="6.3" y="13" width="3.5" height="2.2" fill="#e07a55"/><rect x="12.3" y="12" width="3.3" height="3" fill="#d4521f"/></svg><div class="t " style="left:441px;top:781.80px;font-size:13px;line-height:13px;font-weight:400;color:#3A62BE;">W4-Audrey-Parisian.pdf</div><div class="t " style="left:857px;top:781.80px;font-size:13px;line-height:13px;font-weight:400;color:#333;">R0000168…</div><div class="t " style="left:952px;top:781.80px;font-size:13px;line-height:13px;font-weight:400;color:#333;">admin@sol…</div><div class="t " style="left:1046px;top:781.80px;font-size:13px;line-height:13px;font-weight:400;color:#333;">01/11/2023</div><div class="t" style="left:1052px;width:300px;text-align:center;top:781.80px;font-size:13px;line-height:13px;font-weight:400;color:#333;">-</div><svg class="r" style="left:1331px;top:782px;" width="20" height="16" viewBox="0 0 20 16"><path d="M0.5 3.9H18.3M15.6 0.9L18.8 3.9L15.6 6.9M19.5 11.2H1.7M4.4 8.2L1.2 11.2L4.4 14.2" stroke="#222" stroke-width="2.5" fill="none"/></svg><div class="r" style="left:1455px;top:777px;width:50px;height:26px;background:#F46262;border-radius:4px"></div><div class="t" style="left:1330px;width:300px;text-align:center;top:784.00px;font-size:13px;line-height:13px;font-weight:700;color:#fff;">-6d</div><svg class="r" style="left:1557px;top:781px;" width="18" height="18" viewBox="0 0 18 18"><rect x="0" y="0" width="18" height="18" fill="#fff"/><circle cx="8" cy="7" r="6" fill="#036c70"/><circle cx="12.5" cy="11" r="4.8" fill="#1a9ba1"/><circle cx="9" cy="14.5" r="3.3" fill="#37c6d0"/><rect x="0.5" y="6" width="8.5" height="8.5" rx="1" fill="#03787c"/><text x="4.7" y="13" font-family="Liberation Sans" font-size="7" font-weight="700" fill="#fff" text-anchor="middle">S</text></svg><div class="t " style="left:1580.5px;top:781.80px;font-size:13px;line-height:13px;font-weight:400;color:#333;">Share…</div><div class="t" style="left:1563px;width:300px;text-align:center;top:781.80px;font-size:13px;line-height:13px;font-weight:400;color:#333;">-</div><div class="r" style="left:210px;top:811px;width:1667px;height:42px;background:#FFFFFF"></div><div class="r" style="left:243px;top:822px;width:17px;height:17px;background:#fff;border:2px solid #9c9c9c;border-radius:3px"></div><svg class="r" style="left:302px;top:823px;" width="18" height="18" viewBox="0 0 18 18"><rect x="0" y="0" width="18" height="18" fill="#fff"/><rect x="3.7" y="1.7" width="11" height="14.6" stroke="#8f8f8f" stroke-width="1" fill="#fff"/>
<text x="9.2" y="10.3" font-family="Liberation Sans" font-size="7" fill="#db6a45" text-anchor="middle">pdf</text>
<rect x="2.2" y="12" width="3.5" height="3" fill="#d4521f"/><rect x="6" y="11.8" width="5" height="1.2" fill="#d4521f"/><rect x="6.3" y="13" width="3.5" height="2.2" fill="#e07a55"/><rect x="12.3" y="12" width="3.3" height="3" fill="#d4521f"/></svg><div class="t " style="left:441px;top:823.80px;font-size:13px;line-height:13px;font-weight:400;color:#3A62BE;">W4-Clark-Ferry.pdf</div><div class="t " style="left:857px;top:823.80px;font-size:13px;line-height:13px;font-weight:400;color:#333;">R0000168…</div><div class="t " style="left:952px;top:823.80px;font-size:13px;line-height:13px;font-weight:400;color:#333;">admin@sol…</div><div class="t " style="left:1046px;top:823.80px;font-size:13px;line-height:13px;font-weight:400;color:#333;">01/11/2023</div><div class="t" style="left:1052px;width:300px;text-align:center;top:823.80px;font-size:13px;line-height:13px;font-weight:400;color:#333;">-</div><svg class="r" style="left:1331px;top:824px;" width="20" height="16" viewBox="0 0 20 16"><path d="M0.5 3.9H18.3M15.6 0.9L18.8 3.9L15.6 6.9M19.5 11.2H1.7M4.4 8.2L1.2 11.2L4.4 14.2" stroke="#222" stroke-width="2.5" fill="none"/></svg><div class="r" style="left:1455px;top:819px;width:50px;height:26px;background:#F46262;border-radius:4px"></div><div class="t" style="left:1330px;width:300px;text-align:center;top:826.00px;font-size:13px;line-height:13px;font-weight:700;color:#fff;">-6d</div><svg class="r" style="left:1557px;top:823px;" width="18" height="18" viewBox="0 0 18 18"><rect x="0" y="0" width="18" height="18" fill="#fff"/><circle cx="8" cy="7" r="6" fill="#036c70"/><circle cx="12.5" cy="11" r="4.8" fill="#1a9ba1"/><circle cx="9" cy="14.5" r="3.3" fill="#37c6d0"/><rect x="0.5" y="6" width="8.5" height="8.5" rx="1" fill="#03787c"/><text x="4.7" y="13" font-family="Liberation Sans" font-size="7" font-weight="700" fill="#fff" text-anchor="middle">S</text></svg><div class="t " style="left:1580.5px;top:823.80px;font-size:13px;line-height:13px;font-weight:400;color:#333;">Share…</div><div class="t" style="left:1563px;width:300px;text-align:center;top:823.80px;font-size:13px;line-height:13px;font-weight:400;color:#333;">-</div><div class="r" style="left:210px;top:853px;width:1667px;height:42px;background:#F9F9F9"></div><div class="r" style="left:243px;top:864px;width:17px;height:17px;background:#fff;border:2px solid #9c9c9c;border-radius:3px"></div><svg class="r" style="left:302px;top:865px;" width="18" height="18" viewBox="0 0 18 18"><rect x="0" y="0" width="18" height="18" fill="#fff"/><rect x="3.7" y="1.7" width="11" height="14.6" stroke="#8f8f8f" stroke-width="1" fill="#fff"/>
<text x="9.2" y="10.3" font-family="Liberation Sans" font-size="7" fill="#db6a45" text-anchor="middle">pdf</text>
<rect x="2.2" y="12" width="3.5" height="3" fill="#d4521f"/><rect x="6" y="11.8" width="5" height="1.2" fill="#d4521f"/><rect x="6.3" y="13" width="3.5" height="2.2" fill="#e07a55"/><rect x="12.3" y="12" width="3.3" height="3" fill="#d4521f"/></svg><div class="t " style="left:441px;top:865.80px;font-size:13px;line-height:13px;font-weight:400;color:#3A62BE;">W4-Gilberto-Nolan.pdf</div><div class="t " style="left:857px;top:865.80px;font-size:13px;line-height:13px;font-weight:400;color:#333;">R0000168…</div><div class="t " style="left:952px;top:865.80px;font-size:13px;line-height:13px;font-weight:400;color:#333;">admin@sol…</div><div class="t " style="left:1046px;top:865.80px;font-size:13px;line-height:13px;font-weight:400;color:#333;">01/11/2023</div><div class="t" style="left:1052px;width:300px;text-align:center;top:865.80px;font-size:13px;line-height:13px;font-weight:400;color:#333;">-</div><svg class="r" style="left:1331px;top:866px;" width="20" height="16" viewBox="0 0 20 16"><path d="M0.5 3.9H18.3M15.6 0.9L18.8 3.9L15.6 6.9M19.5 11.2H1.7M4.4 8.2L1.2 11.2L4.4 14.2" stroke="#222" stroke-width="2.5" fill="none"/></svg><div class="r" style="left:1455px;top:861px;width:50px;height:26px;background:#F46262;border-radius:4px"></div><div class="t" style="left:1330px;width:300px;text-align:center;top:868.00px;font-size:13px;line-height:13px;font-weight:700;color:#fff;">-6d</div><svg class="r" style="left:1557px;top:865px;" width="18" height="18" viewBox="0 0 18 18"><rect x="0" y="0" width="18" height="18" fill="#fff"/><circle cx="8" cy="7" r="6" fill="#036c70"/><circle cx="12.5" cy="11" r="4.8" fill="#1a9ba1"/><circle cx="9" cy="14.5" r="3.3" fill="#37c6d0"/><rect x="0.5" y="6" width="8.5" height="8.5" rx="1" fill="#03787c"/><text x="4.7" y="13" font-family="Liberation Sans" font-size="7" font-weight="700" fill="#fff" text-anchor="middle">S</text></svg><div class="t " style="left:1580.5px;top:865.80px;font-size:13px;line-height:13px;font-weight:400;color:#333;">Share…</div><div class="t" style="left:1563px;width:300px;text-align:center;top:865.80px;font-size:13px;line-height:13px;font-weight:400;color:#333;">-</div><div class="r" style="left:210px;top:895px;width:1667px;height:42px;background:#FFFFFF"></div><div class="r" style="left:243px;top:906px;width:17px;height:17px;background:#fff;border:2px solid #9c9c9c;border-radius:3px"></div><svg class="r" style="left:302px;top:907px;" width="18" height="18" viewBox="0 0 18 18"><rect x="0" y="0" width="18" height="18" fill="#fff"/><rect x="3.7" y="1.7" width="11" height="14.6" stroke="#8f8f8f" stroke-width="1" fill="#fff"/>
<text x="9.2" y="10.3" font-family="Liberation Sans" font-size="7" fill="#db6a45" text-anchor="middle">pdf</text>
<rect x="2.2" y="12" width="3.5" height="3" fill="#d4521f"/><rect x="6" y="11.8" width="5" height="1.2" fill="#d4521f"/><rect x="6.3" y="13" width="3.5" height="2.2" fill="#e07a55"/><rect x="12.3" y="12" width="3.3" height="3" fill="#d4521f"/></svg><div class="t " style="left:441px;top:907.80px;font-size:13px;line-height:13px;font-weight:400;color:#3A62BE;">W4-Reuben-Blanda.pdf</div><div class="t " style="left:857px;top:907.80px;font-size:13px;line-height:13px;font-weight:400;color:#333;">R0000168…</div><div class="t " style="left:952px;top:907.80px;font-size:13px;line-height:13px;font-weight:400;color:#333;">admin@sol…</div><div class="t " style="left:1046px;top:907.80px;font-size:13px;line-height:13px;font-weight:400;color:#333;">01/11/2023</div><div class="t" style="left:1052px;width:300px;text-align:center;top:907.80px;font-size:13px;line-height:13px;font-weight:400;color:#333;">-</div><svg class="r" style="left:1331px;top:908px;" width="20" height="16" viewBox="0 0 20 16"><path d="M0.5 3.9H18.3M15.6 0.9L18.8 3.9L15.6 6.9M19.5 11.2H1.7M4.4 8.2L1.2 11.2L4.4 14.2" stroke="#222" stroke-width="2.5" fill="none"/></svg><div class="r" style="left:1455px;top:903px;width:50px;height:26px;background:#F46262;border-radius:4px"></div><div class="t" style="left:1330px;width:300px;text-align:center;top:910.00px;font-size:13px;line-height:13px;font-weight:700;color:#fff;">-6d</div><svg class="r" style="left:1557px;top:907px;" width="18" height="18" viewBox="0 0 18 18"><rect x="0" y="0" width="18" height="18" fill="#fff"/><circle cx="8" cy="7" r="6" fill="#036c70"/><circle cx="12.5" cy="11" r="4.8" fill="#1a9ba1"/><circle cx="9" cy="14.5" r="3.3" fill="#37c6d0"/><rect x="0.5" y="6" width="8.5" height="8.5" rx="1" fill="#03787c"/><text x="4.7" y="13" font-family="Liberation Sans" font-size="7" font-weight="700" fill="#fff" text-anchor="middle">S</text></svg><div class="t " style="left:1580.5px;top:907.80px;font-size:13px;line-height:13px;font-weight:400;color:#333;">Share…</div><div class="t" style="left:1563px;width:300px;text-align:center;top:907.80px;font-size:13px;line-height:13px;font-weight:400;color:#333;">-</div><div class="r" style="left:210px;top:937px;width:1667px;height:42px;background:#F9F9F9"></div><div class="r" style="left:243px;top:948px;width:17px;height:17px;background:#fff;border:2px solid #9c9c9c;border-radius:3px"></div><svg class="r" style="left:302px;top:949px;" width="18" height="18" viewBox="0 0 18 18"><rect x="0" y="0" width="18" height="18" fill="#fff"/><rect x="3.7" y="1.7" width="11" height="14.6" stroke="#8f8f8f" stroke-width="1" fill="#fff"/>
<text x="9.2" y="10.3" font-family="Liberation Sans" font-size="7" fill="#db6a45" text-anchor="middle">pdf</text>
<rect x="2.2" y="12" width="3.5" height="3" fill="#d4521f"/><rect x="6" y="11.8" width="5" height="1.2" fill="#d4521f"/><rect x="6.3" y="13" width="3.5" height="2.2" fill="#e07a55"/><rect x="12.3" y="12" width="3.3" height="3" fill="#d4521f"/></svg><div class="t " style="left:441px;top:949.80px;font-size:13px;line-height:13px;font-weight:400;color:#3A62BE;">W4-Beulah-Rowe.pdf</div><div class="t " style="left:857px;top:949.80px;font-size:13px;line-height:13px;font-weight:400;color:#333;">R0000168…</div><div class="t " style="left:952px;top:949.80px;font-size:13px;line-height:13px;font-weight:400;color:#333;">admin@sol…</div><div class="t " style="left:1046px;top:949.80px;font-size:13px;line-height:13px;font-weight:400;color:#333;">01/11/2023</div><div class="t" style="left:1052px;width:300px;text-align:center;top:949.80px;font-size:13px;line-height:13px;font-weight:400;color:#333;">-</div><svg class="r" style="left:1331px;top:950px;" width="20" height="16" viewBox="0 0 20 16"><path d="M0.5 3.9H18.3M15.6 0.9L18.8 3.9L15.6 6.9M19.5 11.2H1.7M4.4 8.2L1.2 11.2L4.4 14.2" stroke="#222" stroke-width="2.5" fill="none"/></svg><div class="r" style="left:1455px;top:945px;width:50px;height:26px;background:#F46262;border-radius:4px"></div><div class="t" style="left:1330px;width:300px;text-align:center;top:952.00px;font-size:13px;line-height:13px;font-weight:700;color:#fff;">-6d</div><svg class="r" style="left:1557px;top:949px;" width="18" height="18" viewBox="0 0 18 18"><rect x="0" y="0" width="18" height="18" fill="#fff"/><circle cx="8" cy="7" r="6" fill="#036c70"/><circle cx="12.5" cy="11" r="4.8" fill="#1a9ba1"/><circle cx="9" cy="14.5" r="3.3" fill="#37c6d0"/><rect x="0.5" y="6" width="8.5" height="8.5" rx="1" fill="#03787c"/><text x="4.7" y="13" font-family="Liberation Sans" font-size="7" font-weight="700" fill="#fff" text-anchor="middle">S</text></svg><div class="t " style="left:1580.5px;top:949.80px;font-size:13px;line-height:13px;font-weight:400;color:#333;">Share…</div><div class="t" style="left:1563px;width:300px;text-align:center;top:949.80px;font-size:13px;line-height:13px;font-weight:400;color:#333;">-</div><div class="r" style="left:210px;top:979px;width:1667px;height:42px;background:#FFFFFF"></div><div class="r" style="left:243px;top:990px;width:17px;height:17px;background:#fff;border:2px solid #9c9c9c;border-radius:3px"></div><svg class="r" style="left:302px;top:991px;" width="18" height="18" viewBox="0 0 18 18"><rect x="0" y="0" width="18" height="18" fill="#fff"/><rect x="3.7" y="1.7" width="11" height="14.6" stroke="#8f8f8f" stroke-width="1" fill="#fff"/>
<text x="9.2" y="10.3" font-family="Liberation Sans" font-size="7" fill="#db6a45" text-anchor="middle">pdf</text>
<rect x="2.2" y="12" width="3.5" height="3" fill="#d4521f"/><rect x="6" y="11.8" width="5" height="1.2" fill="#d4521f"/><rect x="6.3" y="13" width="3.5" height="2.2" fill="#e07a55"/><rect x="12.3" y="12" width="3.3" height="3" fill="#d4521f"/></svg><div class="t " style="left:441px;top:991.80px;font-size:13px;line-height:13px;font-weight:400;color:#3A62BE;">W4-Lelah-Wunsch.pdf</div><div class="t " style="left:857px;top:991.80px;font-size:13px;line-height:13px;font-weight:400;color:#333;">R0000168…</div><div class="t " style="left:952px;top:991.80px;font-size:13px;line-height:13px;font-weight:400;color:#333;">admin@sol…</div><div class="t " style="left:1046px;top:991.80px;font-size:13px;line-height:13px;font-weight:400;color:#333;">01/11/2023</div><div class="t" style="left:1052px;width:300px;text-align:center;top:991.80px;font-size:13px;line-height:13px;font-weight:400;color:#333;">-</div><svg class="r" style="left:1331px;top:992px;" width="20" height="16" viewBox="0 0 20 16"><path d="M0.5 3.9H18.3M15.6 0.9L18.8 3.9L15.6 6.9M19.5 11.2H1.7M4.4 8.2L1.2 11.2L4.4 14.2" stroke="#222" stroke-width="2.5" fill="none"/></svg><div class="r" style="left:1455px;top:987px;width:50px;height:26px;background:#F46262;border-radius:4px"></div><div class="t" style="left:1330px;width:300px;text-align:center;top:994.00px;font-size:13px;line-height:13px;font-weight:700;color:#fff;">-6d</div><svg class="r" style="left:1557px;top:991px;" width="18" height="18" viewBox="0 0 18 18"><rect x="0" y="0" width="18" height="18" fill="#fff"/><circle cx="8" cy="7" r="6" fill="#036c70"/><circle cx="12.5" cy="11" r="4.8" fill="#1a9ba1"/><circle cx="9" cy="14.5" r="3.3" fill="#37c6d0"/><rect x="0.5" y="6" width="8.5" height="8.5" rx="1" fill="#03787c"/><text x="4.7" y="13" font-family="Liberation Sans" font-size="7" font-weight="700" fill="#fff" text-anchor="middle">S</text></svg><div class="t " style="left:1580.5px;top:991.80px;font-size:13px;line-height:13px;font-weight:400;color:#333;">Share…</div><div class="t" style="left:1563px;width:300px;text-align:center;top:991.80px;font-size:13px;line-height:13px;font-weight:400;color:#333;">-</div><div class="r" style="left:210px;top:1021px;width:1667px;height:42px;background:#F9F9F9"></div><div class="r" style="left:1455px;top:1029px;width:50px;height:26px;background:#F46262;border-radius:4px"></div><div class="r" style="left:650px;top:549px;width:191px;height:237px;background:#fff;border-radius:4px;box-shadow:0 4px 28px rgba(0,0,0,.24)"></div><div class="r" style="left:651px;top:558px;width:189px;height:183px;background:#F4F4F4"></div><div class="t " style="left:691.5px;top:569.15px;font-size:14px;line-height:14px;font-weight:400;color:#b4b4b4;">Edit</div><svg class="r" style="left:663px;top:566px;" width="18" height="17" viewBox="0 0 18 17"><path d="M13 8V14.5A1.5 1.5 0 0 1 11.5 16H1.5A1.5 1.5 0 0 1 0 14.5V4.5A1.5 1.5 0 0 1 1.5 3H8" stroke="#cfcfcf" stroke-width="1.5" fill="none"/><path d="M6 11L6.8 8L14.5 0.8L17 3.3L9.3 10.5Z" stroke="#cfcfcf" stroke-width="1.4" fill="none"/></svg><div class="t " style="left:691.5px;top:605.15px;font-size:14px;line-height:14px;font-weight:400;color:#b4b4b4;">Copy</div><svg class="r" style="left:663px;top:602px;" width="20" height="20" viewBox="0 0 20 20"><rect x="4" y="4" width="15" height="15" rx="2" stroke="#cfcfcf" stroke-width="1.6" fill="none"/><path d="M1 14V2.5A1.5 1.5 0 0 1 2.5 1H13" stroke="#cfcfcf" stroke-width="1.6" fill="none"/></svg><div class="t " style="left:691.5px;top:641.15px;font-size:14px;line-height:14px;font-weight:400;color:#b4b4b4;">Add Physical File Part</div><svg class="r" style="left:667px;top:638px;" width="17" height="20" viewBox="0 0 17 20"><path d="M1 19V11L5 8V19Z M5 19V6L10 2V19Z M10 19V2L15 6V15L10 19" stroke="#cfcfcf" stroke-width="1.3" fill="none" stroke-linejoin="round"/></svg><div class="t " style="left:691.5px;top:677.15px;font-size:14px;line-height:14px;font-weight:400;color:#b4b4b4;">Request</div><svg class="r" style="left:663px;top:675px;" width="20" height="17" viewBox="0 0 20 17"><rect x="0.8" y="0.8" width="18.4" height="15.4" rx="1.5" stroke="#cfcfcf" stroke-width="1.5" fill="none"/><rect x="0.8" y="0.8" width="18.4" height="3.5" fill="#cfcfcf"/><path d="M3.5 7H5M7 7H16M3.5 9.8H5M7 9.8H16M3.5 12.6H5M7 12.6H16" stroke="#cfcfcf" stroke-width="1.1"/></svg><div class="t " style="left:691.5px;top:713.15px;font-size:14px;line-height:14px;font-weight:400;color:#b4b4b4;">Export Labels</div><svg class="r" style="left:666px;top:710px;" width="14" height="18" viewBox="0 0 14 18"><path d="M0 0H14V18L7 12L0 18Z" fill="#cfcfcf"/></svg><div class="t " style="left:691.5px;top:753.15px;font-size:14px;line-height:14px;font-weight:400;color:#14204a;-webkit-text-stroke:0.25px currentColor">Transfer</div><svg class="r" style="left:664px;top:752px;" width="18" height="17" viewBox="0 0 18 17"><path d="M2 8.5H13" stroke="#14204a" stroke-width="3.8" stroke-linecap="round"/><path d="M8.5 2.2L14.8 8.5L8.5 14.8" stroke="#14204a" stroke-width="3.8" fill="none" stroke-linecap="round" stroke-linejoin="round"/></svg>
</body></html>
